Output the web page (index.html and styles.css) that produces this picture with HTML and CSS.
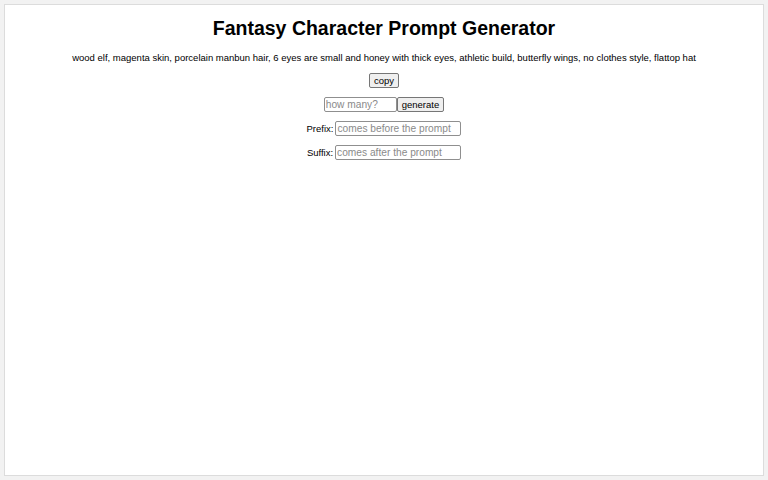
FILE: index.html
```html
<!DOCTYPE html>
<html lang="en">
<head>
<meta charset="utf-8">
<title>Fantasy Character Prompt Generator</title>
<link rel="stylesheet" href="styles.css">
</head>
<body>
<main class="page">
  <h1 class="title">Fantasy Character Prompt Generator</h1>
  <p class="prompt">wood elf, magenta skin, porcelain manbun hair, 6 eyes are small and honey with thick eyes, athletic build, butterfly wings, no clothes style, flattop hat</p>
  <div class="row first"><button class="btn">copy</button></div>
  <div class="row"><input class="field count" type="text" placeholder="how many?"><button class="btn">generate</button></div>
  <div class="row"><label class="label">Prefix:</label><input class="field affix" type="text" placeholder="comes before the prompt"></div>
  <div class="row"><label class="label">Suffix:</label><input class="field affix" type="text" placeholder="comes after the prompt"></div>
</main>
</body>
</html>
```
FILE: styles.css
```css
html, body {
  margin: 0;
  padding: 0;
  height: 100%;
}
body {
  background: #f2f2f2;
  font-family: "Liberation Sans", Arial, sans-serif;
  font-size: 9.5px;
  color: #000;
  padding: 4px;
  box-sizing: border-box;
}
.page {
  background: #fff;
  border: 1px solid #dcdcdc;
  height: 100%;
  box-sizing: border-box;
  display: flex;
  flex-direction: column;
  align-items: center;
}
.title {
  font-size: 19.5px;
  font-weight: bold;
  margin: 11px 0 0;
  line-height: 24px;
}
.prompt {
  margin: 12px 0 0;
  line-height: 12px;
}
.row {
  display: flex;
  align-items: center;
  margin-top: 9px;
}
.btn {
  font-family: "Liberation Sans", Arial, sans-serif;
  font-size: 9.5px;
  background: #efefef;
  border: 1px solid #767676;
  border-radius: 2px;
  padding: 0 4px;
  height: 15px;
  line-height: 11px;
  color: #000;
  margin: 0;
}
.field {
  font-family: "Liberation Sans", Arial, sans-serif;
  font-size: 10.2px;
  border: 1px solid #8f8f8f;
  border-radius: 2px;
  height: 15px;
  box-sizing: border-box;
  padding: 0 1px;
  margin: 0;
}
.field::placeholder { color: #8a8a8a; }
.count { width: 73px; }
.affix { width: 126px; }
.label { margin-right: 2px; }
```
